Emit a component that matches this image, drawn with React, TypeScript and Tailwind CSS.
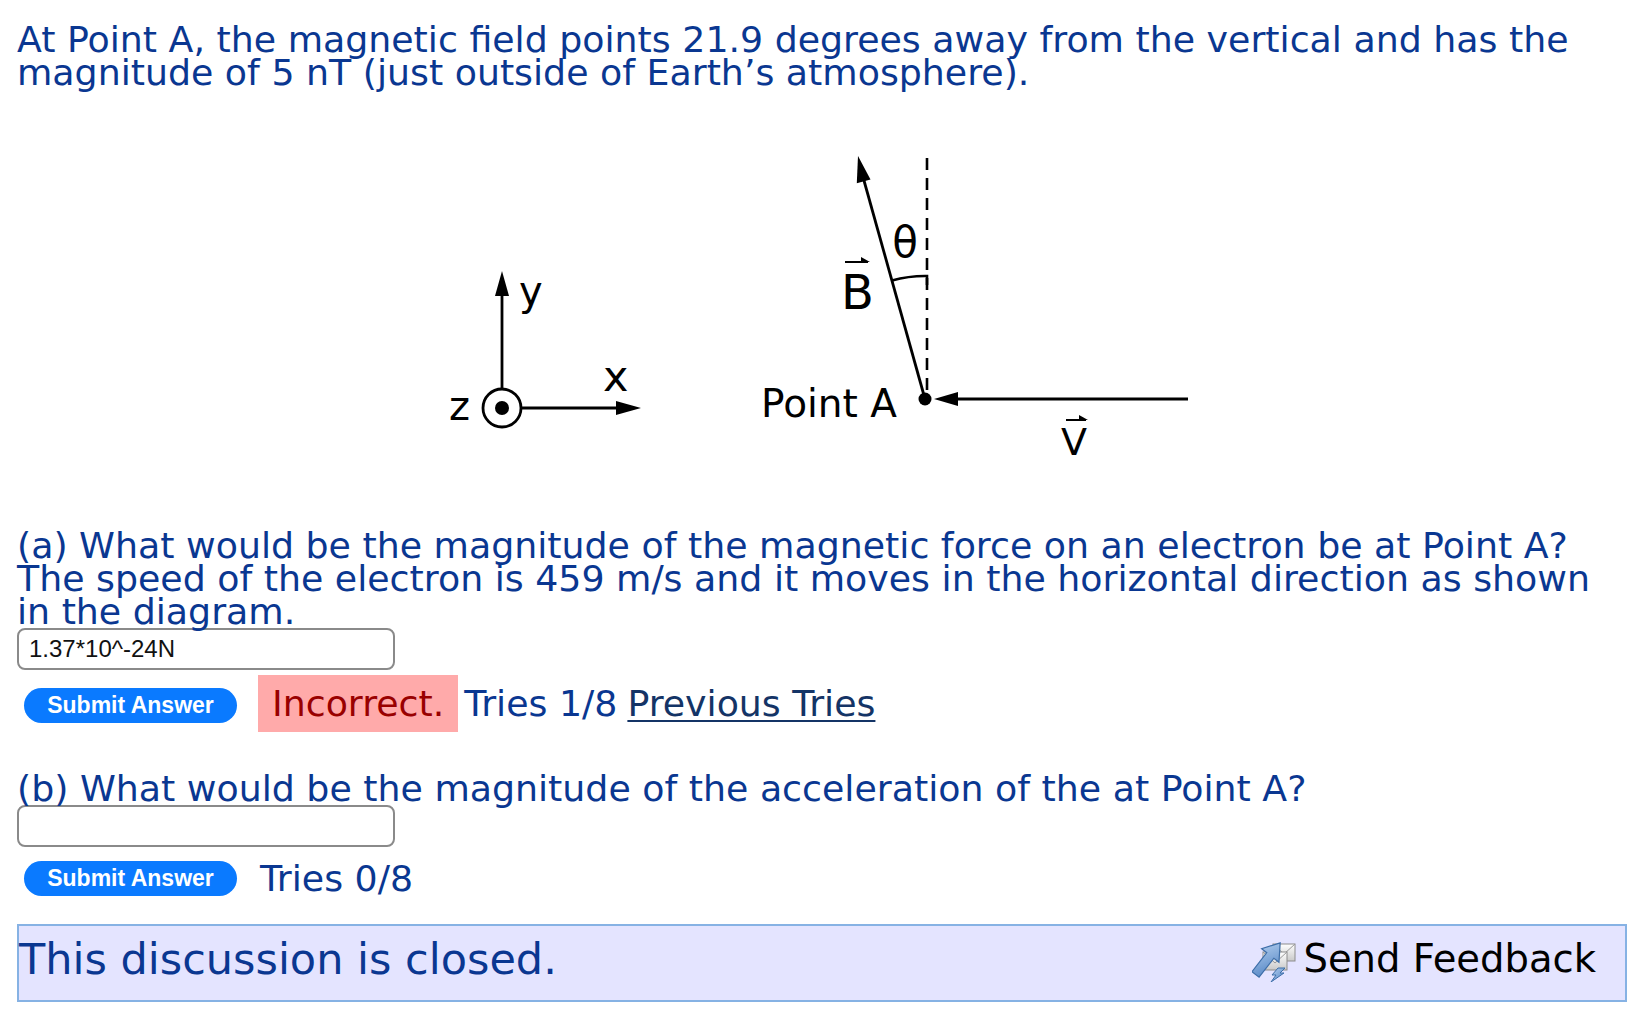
import React from "react";

function Diagram() {
  // local coords: x = page x - 442, y = page y - 90
  return (
    <svg width="760" height="440" viewBox="0 0 760 440" className="block">
      <g stroke="#000" strokeWidth="2.8" fill="none">
        {/* axes */}
        <line x1="60" y1="299" x2="60" y2="200" />
        <line x1="80" y1="319" x2="180" y2="319" />
        <circle cx="60" cy="319" r="19" />
        {/* B arrow */}
        <line x1="483" y1="310" x2="421" y2="88" />
        {/* dashed vertical */}
        <line x1="485" y1="69" x2="485" y2="307" strokeDasharray="12 8" strokeWidth="2.6" />
        {/* theta arc */}
        <path d="M 450 191.5 A 123 123 0 0 1 485 187 L 485 196" strokeWidth="2.6" />
        {/* v line */}
        <line x1="746" y1="310" x2="510" y2="310" />
        {/* vector marks */}
        <line x1="403" y1="173" x2="426" y2="173" strokeWidth="2" />
        <line x1="624" y1="331" x2="644" y2="331" strokeWidth="2" />
      </g>
      <g fill="#000">
        <polygon points="60,182 53,207 67,207" />
        <polygon points="199,319 174,312 174,326" />
        <polygon points="416,67 428.5,90.5 414.8,94.3" />
        <polygon points="492,310 516,303 516,317" />
        <circle cx="60" cy="319" r="7" />
        <circle cx="483" cy="310" r="6.5" />
        <polygon points="428,173 419,168 419,173" />
        <polygon points="646,331 637,326 637,331" />
      </g>
      <g fill="#000" fontFamily="'DejaVu Sans', sans-serif">
        <text x="7" y="331" fontSize="40">z</text>
        <text x="77" y="216" fontSize="40">y</text>
        <text x="161" y="302" fontSize="43">x</text>
        <text x="463" y="168" fontSize="42" textAnchor="middle">θ</text>
        <text x="399" y="220" fontSize="48">B</text>
        <text x="319" y="328" fontSize="39">Point A</text>
        <text x="619" y="366" fontSize="38">V</text>
      </g>
    </svg>
  );
}

function FeedbackIcon() {
  return (
    <svg width="46" height="46" viewBox="0 0 46 46" className="block">
      <defs>
        <linearGradient id="env" x1="0" y1="0" x2="0" y2="1">
          <stop offset="0" stopColor="#ffffff" />
          <stop offset="1" stopColor="#c9c9c9" />
        </linearGradient>
        <linearGradient id="arr" x1="0" y1="0" x2="1" y2="1">
          <stop offset="0" stopColor="#b5d0f0" />
          <stop offset="1" stopColor="#4f82c2" />
        </linearGradient>
      </defs>
      <rect x="21" y="8" width="22" height="17" fill="url(#env)" stroke="#8c8c8c" strokeWidth="1" />
      <path d="M21 8 L32 18 L43 8" fill="none" stroke="#9a9a9a" strokeWidth="1" />
      <rect x="11" y="16" width="24" height="18" fill="url(#env)" stroke="#8c8c8c" strokeWidth="1" />
      <path d="M11 16 L23 27 L35 16" fill="none" stroke="#9a9a9a" strokeWidth="1" />
      <g transform="translate(14 25) rotate(38)">
        <path d="M0 -23 L11 -7 L4.5 -7 L4.5 17 L-4.5 17 L-4.5 -7 L-11 -7 Z" fill="url(#arr)" stroke="#3d6ea8" strokeWidth="1.2" />
      </g>
      <polygon points="26,32 33,32 28,37 32,37 19,46 24,39 20,39" fill="url(#arr)" stroke="#3d6ea8" strokeWidth="1" />
    </svg>
  );
}

export default function App() {
  return (
    <div className="w-[1640px] min-h-[1017px] bg-white pl-[17px] pr-[13px] pt-[23px] font-['DejaVu_Sans',sans-serif] text-[36.3px] leading-[33px] text-[#0a3791]">
      <p>
        At Point A, the magnetic field points 21.9 degrees away from the vertical and has the
        magnitude of 5 nT (just outside of Earth’s atmosphere).
      </p>

      <div className="flex justify-center">
        <Diagram />
      </div>

      <p className="pr-[8px]">
        (a) What would be the magnitude of the magnetic force on an electron be at Point A? The
        speed of the electron is 459 m/s and it moves in the horizontal direction as shown in the
        diagram.
      </p>
      <input
        readOnly
        value="1.37*10^-24N"
        className="block w-[378px] h-[42px] border-2 border-[#8a8a8a] rounded-[8px] bg-white px-[10px] font-['Liberation_Sans',sans-serif] text-[24px] text-[#111] outline-none"
      />
      <div className="mt-[5px] flex items-center">
        <button className="ml-[7px] mt-[4px] w-[213px] h-[35px] rounded-full bg-[#0a7aff] text-white font-bold text-[23px] leading-none font-['Liberation_Sans',sans-serif]">
          Submit Answer
        </button>
        <span className="ml-[21px] bg-[#ffaaaa] px-[14px] py-[12px] text-[#990000]">Incorrect.</span>
        <span className="ml-[6px]">Tries 1/8</span>
        <a href="#" className="ml-[10px] text-[#143466] underline decoration-2 underline-offset-[4px]">
          Previous Tries
        </a>
      </div>

      <p className="mt-[40px]">(b) What would be the magnitude of the acceleration of the at Point A?</p>
      <input
        readOnly
        value=""
        className="block w-[378px] h-[42px] border-2 border-[#8a8a8a] rounded-[8px] bg-white px-[10px] font-['Liberation_Sans',sans-serif] text-[24px] outline-none"
      />
      <div className="mt-[14px] flex items-center">
        <button className="ml-[7px] w-[213px] h-[35px] rounded-full bg-[#0a7aff] text-white font-bold text-[23px] leading-none font-['Liberation_Sans',sans-serif]">
          Submit Answer
        </button>
        <span className="ml-[23px]">Tries 0/8</span>
      </div>

      <div className="mt-[28px] h-[78px] border-2 border-[#86b2e4] bg-[#e4e4ff] flex items-center justify-between pb-[8px]">
        <span className="text-[43px] leading-[50px]">This discussion is closed.</span>
        <a href="#" className="mr-[29px] flex items-center gap-[5px] text-black text-[38.5px] leading-[44px]">
          <FeedbackIcon />
          <span>Send Feedback</span>
        </a>
      </div>
    </div>
  );
}
